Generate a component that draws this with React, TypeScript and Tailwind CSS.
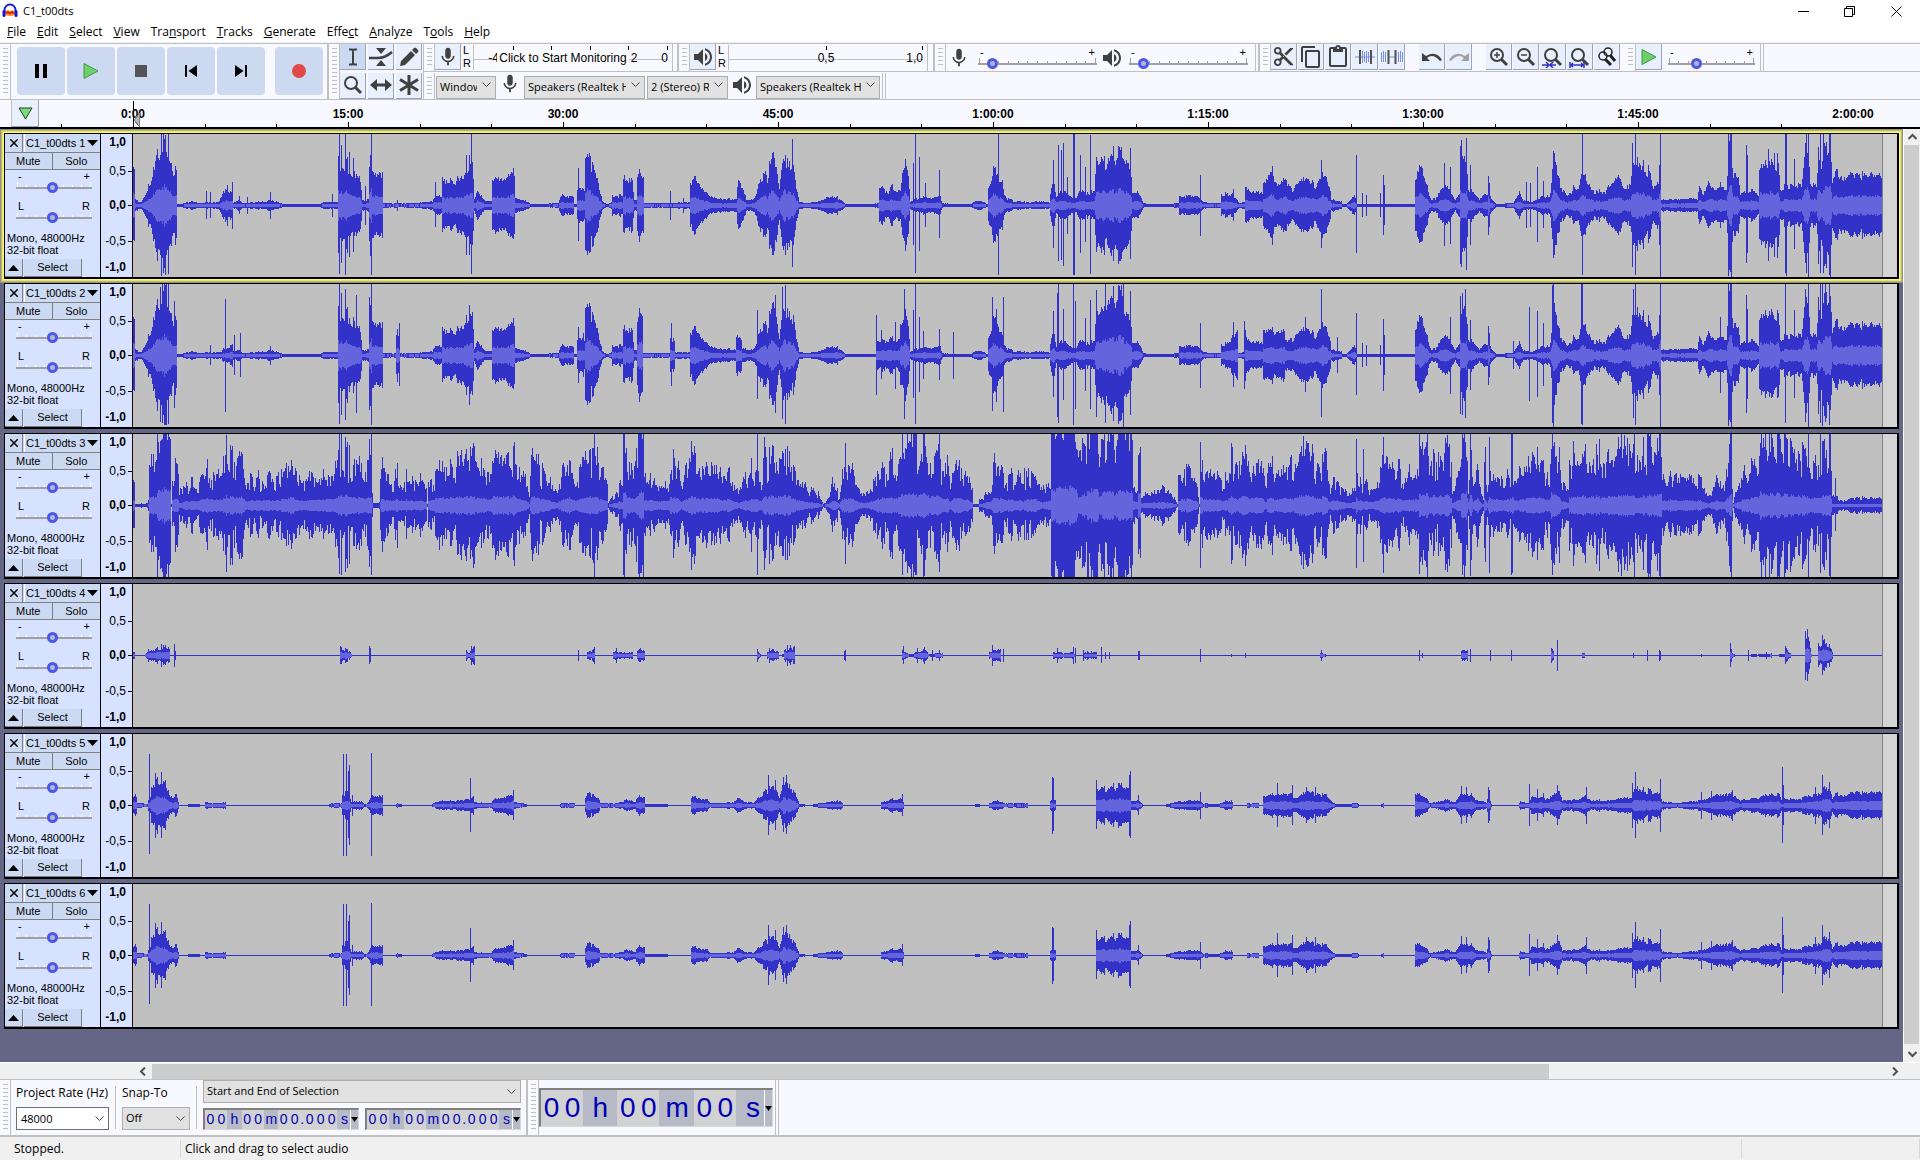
import React, { useMemo } from 'react';
import {
   MdContentCopy,
   MdContentCut,
   MdContentPaste,
   MdMic,
   MdSkipNext,
   MdSkipPrevious,
   MdVolumeUp,
} from 'react-icons/md';

type Track = {
   name: string;
   env: number[];
   spikes: number[];
   jitter: number;
   rms: number;
   selected?: boolean;
};

const CLIP_WIDTH = 1749;
const HALF = 71;

// Envelopes are flat lists of x, amplitude pairs; spikes use the same shape.
const FRONT_ENV = [
   0, 38, 2, 32, 2, 6, 6, 3, 8, 3, 14, 18, 18, 25, 20, 42, 25, 58, 31, 65, 37, 50, 43, 32, 44, 32, 44, 1, 47, 1, 54, 3,
   60, 4, 68, 2, 72, 3, 85, 3, 89, 12, 93, 18, 100, 10, 100, 3, 106, 5, 109, 2, 140, 5, 150, 1, 181, 1, 188, 2, 192, 4,
   204, 3, 205, 3, 205, 48, 215, 46, 227, 27, 229, 6, 235, 6, 236, 40, 238, 55, 239, 32, 249, 30, 250, 2, 286, 2, 299,
   5, 301, 10, 308, 9, 309, 28, 328, 27, 339, 40, 341, 5, 344, 16, 351, 5, 359, 5, 359, 27, 374, 28, 379, 42, 381, 26,
   382, 8, 395, 3, 397, 1, 425, 2, 427, 10, 440, 9, 441, 1, 444, 1, 444, 18, 451, 14, 452, 42, 454, 53, 460, 38, 464,
   28, 469, 4, 473, 1, 478, 3, 479, 11, 489, 10, 490, 30, 499, 28, 501, 5, 504, 5, 504, 35, 510, 28, 511, 2, 533, 2,
   556, 3, 557, 24, 563, 28, 571, 15, 579, 8, 597, 6, 603, 7, 605, 28, 609, 16, 613, 6, 618, 5, 623, 12, 627, 30, 634,
   32, 637, 48, 641, 55, 644, 40, 646, 18, 648, 40, 651, 54, 658, 40, 660, 40, 662, 25, 666, 4, 672, 2, 685, 4, 693, 8,
   704, 9, 709, 4, 712, 1, 737, 1, 745, 2, 746, 22, 756, 14, 758, 20, 767, 16, 769, 35, 772, 50, 775, 30, 777, 3, 785,
   8, 794, 9, 807, 9, 809, 2, 817, 1, 838, 1, 842, 4, 848, 5, 854, 1, 855, 20, 859, 38, 862, 40, 865, 30, 869, 20, 873,
   8, 880, 4, 895, 3, 903, 4, 917, 3, 917, 15, 920, 30, 923, 10, 930, 16, 940, 6, 947, 15, 955, 12, 961, 15, 963, 48,
   972, 48, 976, 52, 987, 52, 991, 48, 997, 45, 999, 15, 1005, 15, 1008, 8, 1010, 2, 1014, 1, 1028, 1, 1045, 2, 1046,
   10, 1067, 9, 1069, 4, 1075, 2, 1087, 2, 1088, 12, 1099, 12, 1103, 6, 1106, 2, 1111, 3, 1112, 18, 1129, 12, 1130, 22,
   1139, 35, 1144, 22, 1152, 28, 1158, 16, 1163, 24, 1171, 26, 1183, 22, 1188, 35, 1191, 28, 1197, 20, 1198, 6, 1208,
   4, 1209, 1, 1213, 1, 1221, 10, 1224, 3, 1224, 1, 1281, 1, 1282, 28, 1288, 42, 1292, 24, 1298, 6, 1302, 8, 1310, 22,
   1317, 14, 1322, 5, 1327, 12, 1327, 55, 1333, 50, 1335, 18, 1340, 14, 1346, 6, 1352, 12, 1354, 12, 1355, 38, 1357,
   10, 1361, 3, 1363, 1, 1380, 3, 1386, 12, 1390, 5, 1399, 3, 1407, 8, 1417, 12, 1419, 40, 1420, 60, 1424, 40, 1427,
   18, 1434, 10, 1440, 18, 1445, 18, 1448, 35, 1455, 25, 1461, 14, 1472, 15, 1482, 28, 1487, 26, 1491, 15, 1497, 22,
   1499, 45, 1505, 44, 1514, 38, 1520, 20, 1525, 24, 1527, 60, 1528, 6, 1551, 6, 1564, 7, 1566, 18, 1570, 12, 1575, 26,
   1583, 14, 1587, 22, 1593, 14, 1595, 55, 1598, 68, 1600, 35, 1605, 30, 1607, 12, 1619, 16, 1625, 12, 1626, 40, 1635,
   48, 1645, 42, 1647, 15, 1651, 20, 1655, 20, 1663, 22, 1669, 25, 1672, 60, 1675, 60, 1677, 25, 1683, 20, 1685, 65,
   1689, 40, 1692, 65, 1697, 65, 1699, 22, 1702, 32, 1715, 33, 1723, 30, 1738, 31, 1749, 29,
];

const FRONT_SPIKES = [
   28, 72, 30, 72, 35, 72, 73, 14, 77, 13, 94, 20, 99, 23, 106, 9, 114, 8, 137, 13, 199, 11, 206, 72, 208, 60, 212, 72,
   216, 53, 220, 47, 232, 19, 238, 72, 264, 5, 302, 23, 333, 50, 336, 50, 338, 72, 445, 37, 537, 14, 550, 7, 659, 66,
   780, 42, 782, 71, 786, 48, 792, 22, 806, 35, 865, 72, 869, 25, 920, 45, 925, 60, 928, 55, 930, 62, 934, 28, 940, 72,
   941, 72, 947, 50, 952, 38, 957, 70, 997, 57, 1067, 30, 1100, 16, 1188, 45, 1223, 50, 1229, 12, 1233, 10, 1247, 12,
   1250, 30, 1251, 20, 1311, 42, 1317, 38, 1328, 65, 1333, 67, 1337, 40, 1393, 23, 1397, 22, 1404, 38, 1410, 24, 1449,
   72, 1499, 62, 1502, 72, 1527, 72, 1595, 72, 1597, 72, 1613, 60, 1614, 50, 1635, 56, 1641, 52, 1644, 52, 1652, 72,
   1653, 72, 1661, 46, 1673, 72, 1675, 72, 1687, 72, 1690, 72, 1697, 72,
];

const CENTER_ENV = [
   0, 28, 2, 22, 2, 1, 12, 2, 15, 5, 16, 58, 20, 70, 23, 55, 25, 110, 37, 110, 38, 2, 39, 50, 45, 35, 46, 20, 49, 14,
   50, 24, 66, 32, 74, 44, 89, 44, 93, 68, 98, 56, 108, 54, 113, 34, 123, 32, 142, 34, 152, 40, 158, 60, 164, 34, 171,
   32, 181, 38, 192, 44, 204, 48, 206, 70, 217, 65, 227, 54, 239, 50, 239, 12, 240, 2, 246, 3, 248, 50, 250, 38, 265,
   38, 294, 26, 294, 3, 295, 38, 315, 54, 339, 56, 359, 44, 359, 58, 372, 60, 381, 58, 383, 48, 394, 26, 396, 8, 398,
   60, 408, 48, 424, 14, 426, 32, 436, 58, 439, 34, 462, 60, 474, 28, 475, 4, 481, 15, 490, 30, 490, 90, 493, 90, 494,
   58, 501, 46, 504, 70, 510, 90, 511, 34, 535, 26, 537, 62, 544, 46, 548, 24, 558, 62, 563, 50, 586, 46, 597, 36, 605,
   16, 614, 34, 621, 50, 628, 32, 631, 56, 637, 64, 643, 68, 654, 68, 662, 38, 673, 22, 683, 19, 690, 2, 695, 8, 700,
   34, 706, 10, 709, 38, 713, 50, 719, 38, 731, 14, 742, 32, 744, 50, 760, 54, 765, 60, 769, 80, 777, 74, 783, 80, 804,
   70, 807, 56, 814, 46, 817, 20, 821, 46, 832, 46, 839, 18, 840, 1, 845, 1, 846, 8, 857, 26, 861, 54, 873, 38, 890,
   30, 895, 44, 902, 40, 909, 18, 917, 35, 918, 125, 943, 125, 945, 60, 953, 80, 955, 115, 964, 115, 966, 62, 974, 110,
   980, 85, 999, 110, 1000, 35, 1004, 20, 1005, 90, 1007, 90, 1008, 12, 1025, 22, 1037, 16, 1044, 2, 1045, 38, 1054,
   46, 1063, 28, 1066, 2, 1067, 58, 1071, 44, 1094, 30, 1097, 70, 1104, 46, 1112, 58, 1129, 48, 1133, 20, 1134, 46,
   1152, 44, 1167, 64, 1175, 64, 1192, 54, 1197, 28, 1204, 34, 1214, 12, 1222, 20, 1223, 60, 1225, 36, 1242, 24, 1250,
   48, 1263, 44, 1282, 42, 1285, 36, 1286, 74, 1298, 70, 1313, 72, 1318, 58, 1319, 14, 1328, 40, 1328, 100, 1333, 100,
   1335, 20, 1337, 80, 1340, 25, 1344, 50, 1347, 20, 1350, 5, 1351, 50, 1354, 20, 1356, 60, 1359, 42, 1376, 42, 1379,
   70, 1382, 28, 1395, 50, 1405, 50, 1417, 46, 1418, 90, 1421, 80, 1426, 60, 1428, 25, 1435, 20, 1436, 60, 1451, 62,
   1478, 58, 1495, 68, 1500, 78, 1503, 46, 1508, 60, 1516, 70, 1524, 76, 1528, 90, 1529, 38, 1545, 34, 1568, 30, 1575,
   12, 1583, 30, 1591, 20, 1593, 38, 1598, 74, 1600, 5, 1603, 20, 1612, 42, 1625, 60, 1627, 88, 1642, 84, 1652, 74,
   1669, 68, 1677, 50, 1686, 58, 1697, 70, 1699, 10, 1702, 8, 1749, 8,
];

const CENTER_SPIKES = [
   93, 70, 206, 72, 208, 72, 212, 68, 216, 60, 236, 66, 238, 72, 264, 42, 333, 56, 461, 72, 464, 58, 490, 72, 491, 72,
   505, 72, 508, 72, 558, 64, 624, 72, 631, 68, 712, 62, 769, 72, 774, 72, 783, 72, 791, 72, 806, 72, 861, 52, 1067,
   63, 1098, 62, 1112, 60, 1223, 66, 1230, 56, 1250, 68, 1286, 72, 1337, 72, 1352, 58, 1356, 68, 1378, 72, 1379, 72,
   1404, 58, 1419, 72, 1488, 72, 1501, 72, 1514, 72, 1526, 72, 1527, 72, 1597, 72, 1598, 64, 1636, 72, 1652, 72, 1675,
   72, 1687, 72, 1696, 72, 1697, 72, 1702, 27,
];

const LFE_ENV = [
   0, 3, 2, 3, 2, 0, 11, 0, 14, 5, 24, 8, 36, 9, 37, 0, 206, 0, 207, 9, 217, 5, 219, 0, 332, 0, 333, 6, 335, 2, 341, 8,
   342, 0, 453, 0, 454, 3, 461, 6, 462, 0, 479, 0, 480, 6, 487, 3, 499, 4, 500, 0, 504, 0, 504, 6, 511, 5, 512, 0, 623,
   0, 624, 5, 627, 1, 628, 0, 633, 0, 634, 6, 645, 6, 646, 0, 650, 1, 651, 7, 661, 9, 662, 0, 768, 0, 769, 6, 776, 1,
   780, 1, 785, 5, 793, 6, 796, 1, 809, 3, 810, 0, 855, 0, 856, 5, 867, 7, 868, 0, 919, 0, 920, 4, 932, 2, 939, 3, 944,
   0, 950, 0, 952, 4, 963, 3, 964, 0, 1186, 0, 1187, 3, 1192, 1, 1193, 0, 1327, 0, 1328, 7, 1334, 6, 1335, 0, 1417, 0,
   1418, 10, 1420, 5, 1421, 0, 1448, 0, 1449, 2, 1451, 2, 1452, 0, 1596, 0, 1597, 7, 1601, 1, 1602, 0, 1629, 1, 1638,
   2, 1639, 0, 1651, 1, 1653, 7, 1657, 2, 1658, 0, 1671, 0, 1672, 18, 1676, 18, 1678, 2, 1679, 0, 1684, 0, 1685, 15,
   1694, 14, 1698, 7, 1700, 0, 1749, 0,
];

const LFE_SPIKES = [
   28, 11, 30, 10, 41, 11, 42, 4, 207, 9, 236, 9, 237, 7, 338, 9, 445, 5, 461, 8, 483, 7, 507, 7, 624, 6, 636, 7, 654,
   10, 657, 10, 711, 4, 712, 5, 770, 9, 784, 7, 791, 8, 799, 5, 806, 5, 859, 10, 870, 6, 924, 7, 940, 8, 942, 7, 950,
   5, 968, 8, 972, 3, 976, 3, 1005, 4, 1006, 4, 1067, 6, 1098, 1, 1112, 2, 1188, 5, 1286, 5, 1289, 2, 1337, 6, 1357, 5,
   1378, 5, 1424, 15, 1500, 2, 1514, 5, 1526, 5, 1527, 4, 1568, 1, 1597, 12, 1615, 5, 1633, 3, 1652, 9, 1672, 24, 1674,
   26, 1675, 18, 1689, 20, 1691, 16,
];

const REAR_ENV = [
   0, 8, 3, 10, 4, 2, 14, 2, 17, 10, 18, 20, 23, 28, 28, 27, 32, 22, 37, 10, 43, 10, 45, 3, 46, 0, 54, 0, 55, 1, 66, 1,
   67, 0, 71, 0, 72, 3, 83, 2, 92, 3, 93, 0, 195, 0, 198, 2, 208, 2, 209, 13, 216, 14, 218, 4, 229, 4, 231, 1, 235, 3,
   238, 9, 249, 9, 250, 0, 262, 0, 264, 2, 268, 1, 269, 0, 298, 0, 299, 2, 310, 5, 330, 5, 340, 8, 341, 3, 358, 2, 360,
   6, 373, 9, 380, 14, 381, 3, 393, 1, 394, 0, 426, 0, 427, 2, 441, 2, 442, 0, 451, 0, 452, 6, 454, 13, 466, 7, 467, 2,
   478, 2, 489, 3, 493, 7, 502, 3, 504, 9, 511, 8, 512, 1, 534, 1, 535, 0, 557, 0, 558, 9, 574, 6, 577, 2, 600, 3, 605,
   8, 611, 3, 620, 3, 627, 10, 637, 20, 644, 18, 646, 8, 650, 26, 657, 20, 663, 10, 666, 1, 677, 0, 686, 2, 707, 5,
   710, 0, 748, 0, 748, 3, 757, 6, 769, 8, 771, 0, 841, 0, 842, 1, 846, 1, 847, 0, 855, 0, 856, 3, 864, 5, 872, 2, 894,
   2, 895, 0, 917, 0, 917, 6, 922, 6, 923, 0, 962, 0, 963, 18, 979, 20, 993, 19, 997, 20, 998, 5, 1005, 6, 1009, 1,
   1011, 0, 1030, 0, 1045, 4, 1067, 5, 1069, 2, 1085, 1, 1091, 4, 1098, 5, 1100, 0, 1113, 0, 1114, 2, 1125, 2, 1126, 0,
   1129, 0, 1130, 9, 1142, 12, 1157, 12, 1162, 8, 1174, 14, 1187, 13, 1197, 7, 1200, 2, 1208, 1, 1217, 1, 1223, 3,
   1226, 0, 1247, 0, 1250, 2, 1251, 0, 1281, 0, 1282, 13, 1292, 8, 1297, 2, 1311, 6, 1322, 3, 1328, 12, 1338, 12, 1343,
   5, 1353, 3, 1355, 12, 1358, 1, 1359, 0, 1385, 0, 1387, 4, 1395, 2, 1398, 8, 1415, 8, 1425, 16, 1429, 5, 1444, 6,
   1452, 10, 1458, 5, 1475, 5, 1498, 8, 1501, 18, 1516, 15, 1527, 13, 1529, 4, 1544, 2, 1567, 5, 1579, 10, 1599, 12,
   1607, 5, 1624, 8, 1633, 12, 1645, 12, 1648, 6, 1665, 7, 1682, 12, 1696, 21, 1699, 6, 1702, 11, 1719, 13, 1749, 13,
];

const REAR_SPIKES = [
   2, 11, 16, 51, 22, 32, 28, 33, 210, 51, 213, 51, 215, 34, 216, 40, 219, 10, 238, 52, 337, 27, 635, 30, 642, 25, 650,
   28, 653, 30, 769, 11, 919, 28, 920, 27, 963, 25, 996, 30, 997, 34, 1005, 10, 1067, 13, 1144, 22, 1159, 20, 1173, 18,
   1182, 18, 1328, 19, 1333, 18, 1355, 18, 1356, 15, 1396, 21, 1404, 16, 1410, 12, 1424, 20, 1453, 18, 1499, 22, 1502,
   33, 1527, 26, 1568, 13, 1578, 14, 1599, 15, 1649, 38, 1650, 20, 1682, 18, 1689, 30, 1696, 23,
];

// Replaces the stretch between x0 and x1 with a straight ramp a0 -> a1.
const patch = (env: number[], parts: number[][]) =>
   parts.reduce((list, [x0, x1, a0, a1]) => {
      const before: number[] = [];
      const after: number[] = [];
      for (let i = 0; i < list.length; i += 2) {
         if (list[i] < x0) before.push(list[i], list[i + 1]);
         if (list[i] > x1) after.push(list[i], list[i + 1]);
      }
      const prev = before[before.length - 1];
      return [...before, x0, prev, x0, a0, x1, a1, x1, after[1], ...after];
   }, env);

const SURROUND_ENV = patch(FRONT_ENV, [
   [89, 100, 6, 10],
   [263, 267, 22, 28],
   [504, 510, 42, 42],
   [537, 542, 22, 12],
   [603, 609, 20, 16],
   [743, 767, 16, 18],
   [972, 991, 60, 62],
   [1094, 1105, 14, 26],
   [1130, 1152, 25, 26],
]);

const SURROUND_SPIKES = [
   27, 68, 29, 72, 31, 72, 33, 72, 35, 72, 41, 54, 77, 10, 92, 56, 101, 20, 107, 22, 137, 9, 206, 72, 208, 62, 212, 66,
   220, 38, 223, 60, 236, 58, 238, 72, 264, 26, 266, 32, 333, 40, 336, 50, 445, 28, 450, 22, 538, 32, 624, 45, 642, 60,
   649, 68, 652, 70, 743, 40, 748, 25, 762, 33, 771, 66, 780, 45, 782, 72, 786, 38, 790, 24, 806, 26, 820, 23, 859, 58,
   863, 46, 870, 58, 920, 44, 924, 62, 925, 72, 930, 46, 940, 72, 942, 54, 952, 37, 957, 55, 963, 65, 972, 72, 986, 66,
   990, 72, 997, 64, 1067, 32, 1100, 33, 1111, 34, 1112, 25, 1172, 38, 1188, 66, 1204, 18, 1223, 42, 1229, 12, 1233,
   10, 1247, 10, 1250, 36, 1251, 20, 1317, 38, 1329, 62, 1332, 66, 1337, 35, 1380, 14, 1396, 48, 1404, 44, 1410, 32,
   1419, 70, 1420, 72, 1448, 72, 1449, 72, 1500, 66, 1502, 72, 1527, 72, 1587, 38, 1595, 72, 1597, 72, 1613, 60, 1614,
   46, 1652, 72, 1661, 45, 1672, 66, 1675, 72, 1687, 72, 1689, 72, 1692, 72, 1696, 72,
];

const TRACKS: Track[] = [
   { name: 'C1_t00dts 1', env: FRONT_ENV, spikes: FRONT_SPIKES, jitter: 0.4, rms: 0.24, selected: true },
   { name: 'C1_t00dts 2', env: SURROUND_ENV, spikes: SURROUND_SPIKES, jitter: 0.4, rms: 0.24 },
   { name: 'C1_t00dts 3', env: CENTER_ENV, spikes: CENTER_SPIKES, jitter: 0.7, rms: 0.12 },
   { name: 'C1_t00dts 4', env: LFE_ENV, spikes: LFE_SPIKES, jitter: 0.6, rms: 0.3 },
   { name: 'C1_t00dts 5', env: REAR_ENV, spikes: REAR_SPIKES, jitter: 0.45, rms: 0.25 },
   { name: 'C1_t00dts 6', env: REAR_ENV, spikes: REAR_SPIKES, jitter: 0.45, rms: 0.25 },
];

const buildPaths = ({ env, spikes, jitter, rms }: Track) => {
   let seed = 7919;
   const random = () => {
      seed = (seed * 16807) % 2147483647;
      return seed / 2147483647;
   };
   const peaks = new Map<number, number>();
   for (let i = 0; i < spikes.length; i += 2) peaks.set(spikes[i], spikes[i + 1]);

   let outer = '';
   let inner = '';
   let k = 0;
   let drift = 0;
   let hold = 0;
   for (let x = 0; x < CLIP_WIDTH; x++) {
      while (k + 4 < env.length && env[k + 2] <= x) k += 2;
      // loudness wanders in short steps so neighbouring columns clump together
      if (hold-- <= 0) {
         drift = random();
         hold = Math.floor(random() * 4);
      }
      const span = env[k + 2] - env[k] || 1;
      const t = Math.min(1, (x - env[k]) / span);
      const amp = env[k + 1] + (env[k + 3] - env[k + 1]) * t;
      const level = 1.15 - jitter * (0.5 * random() + 0.7 * drift);
      const up = Math.max(peaks.get(x) ?? 0, amp * level);
      const down = Math.max((peaks.get(x) ?? 0) * (0.92 + 0.08 * random()), amp * (level - 0.1 * random()));
      const top = Math.max(0, Math.round(HALF - up));
      const bottom = Math.min(143, Math.round(HALF + 1 + down));
      outer += `M${x}.5 ${top}V${bottom}`;
      const core = Math.round(Math.min(28, amp * rms * (0.8 + 0.3 * random() + 0.3 * (1 - drift))));
      if (core >= 1) inner += `M${x}.5 ${HALF - core}V${HALF + 1 + core}`;
   }
   return { outer, inner };
};

const Waveform = ({ track }: { track: Track }) => {
   const { outer, inner } = useMemo(() => buildPaths(track), [track]);
   return (
      <svg width={CLIP_WIDTH} height={143} className="block shrink-0 bg-[#c0c0c0]" shapeRendering="crispEdges">
         <path d={outer} stroke="#3232c8" />
         <path d={inner} stroke="#6464dc" />
      </svg>
   );
};

const Grip = () => (
   <div className="flex w-[11px] shrink-0 justify-center border-r border-[#c0c0c0] py-1">
      <div className="w-[5px] bg-[repeating-linear-gradient(#c0c0c0_0_1px,transparent_1px_4px)]" />
   </div>
);

const ToolButton = ({
   label,
   active,
   children,
}: {
   label: string;
   active?: boolean;
   children: React.ReactNode;
}) => (
   <button
      aria-label={label}
      className={`flex h-[26px] w-[26px] shrink-0 items-center justify-center border-r border-b border-[#9aa3b8] text-[#404040] ${
         active ? 'bg-[#ccd9f2]' : 'bg-[#e9f0fd]'
      }`}
   >
      {children}
   </button>
);

const TransportButton = ({ label, children }: { label: string; children: React.ReactNode }) => (
   <button aria-label={label} className="flex h-12 w-12 items-center justify-center rounded-[4px] bg-[#cdd9f1]">
      {children}
   </button>
);

const Slider = ({
   label,
   value,
   ticks,
   left,
   right,
   light,
}: {
   label: string;
   value: number;
   ticks: number;
   left: string;
   right: string;
   light?: boolean;
}) => (
   <div className="flex w-full flex-col">
      <div className="flex h-3 justify-between px-[2px] text-[11px] leading-3">
         <span>{left}</span>
         <span>{right}</span>
      </div>
      <div className="relative h-3">
         <div className="absolute inset-x-0 top-0 flex h-[7px] items-end justify-between border-b-2 border-[#a0a0a0] px-px">
            {Array.from({ length: ticks }, (_, i) => (
               <span
                  key={i}
                  className={`w-px ${i === 0 || i === ticks - 1 ? 'h-[5px]' : 'h-[2px]'} ${
                     light ? 'bg-white' : 'bg-[#a0a0a0]'
                  }`}
               />
            ))}
         </div>
         <input
            type="range"
            aria-label={label}
            defaultValue={value}
            className="absolute inset-x-0 top-0 h-[11px] w-full appearance-none bg-transparent [&::-webkit-slider-thumb]:h-[11px] [&::-webkit-slider-thumb]:w-[11px] [&::-webkit-slider-thumb]:appearance-none [&::-webkit-slider-thumb]:rounded-full [&::-webkit-slider-thumb]:border-[3px] [&::-webkit-slider-thumb]:border-[#4b58ea] [&::-webkit-slider-thumb]:bg-[#b4b8cc]"
         />
      </div>
   </div>
);

const Dropdown = ({ label, value, className }: { label: string; value: string; className: string }) => (
   <div className={`relative shrink-0 ${className}`}>
      <select
         aria-label={label}
         className="h-full w-full appearance-none overflow-hidden border border-[#adadad] bg-[#e1e1e1] pr-[18px] pl-[3px] text-[11px]"
      >
         <option>{value}</option>
      </select>
      <Chevron />
   </div>
);

const Chevron = () => (
   <svg width="9" height="6" className="pointer-events-none absolute top-1/2 right-[5px] -translate-y-1/2">
      <path d="M.5 .5L4.500 4.500L8.500 .5" fill="none" stroke="#444" />
   </svg>
);

const Lens = ({ sign, children }: { sign?: string; children?: React.ReactNode }) => (
   <svg width="22" height="22" viewBox="0 0 22 22" fill="none" stroke="#404040">
      <circle cx="9" cy="9" r="6" strokeWidth="2" />
      <path d="M13 13L19 19" strokeWidth="3" />
      {sign && <path d={sign} strokeWidth="1.500" />}
      {children}
   </svg>
);

const PlayIcon = () => (
   <svg width="16" height="18" viewBox="0 0 16 18">
      <path d="M1 1.500L15 9L1 16.500Z" fill="#6fcf6f" stroke="#3f9a45" />
   </svg>
);

const MENUS = [
   ['', 'F', 'ile'],
   ['', 'E', 'dit'],
   ['', 'S', 'elect'],
   ['', 'V', 'iew'],
   ['Tra', 'n', 'sport'],
   ['', 'T', 'racks'],
   ['', 'G', 'enerate'],
   ['Effe', 'c', 't'],
   ['', 'A', 'nalyze'],
   ['T', 'o', 'ols'],
   ['', 'H', 'elp'],
];

const TitleBar = () => (
   <header className="flex h-[22px] items-center justify-between bg-white">
      <div className="flex items-center gap-[5px] pl-[2px]">
         <svg width="16" height="16" viewBox="0 0 16 16">
            <path d="M3 9Q5 6 8 8Q11 6 13 9V12Q8 14 3 12Z" fill="#ff9b1a" />
            <path d="M4 10L6 9L8 10.500L10 9L12 10.500" stroke="#e02010" strokeWidth="2" fill="none" />
            <path d="M2.500 9V7A5.500 5.500 0 0 1 13.500 7V9" fill="none" stroke="#1414d8" strokeWidth="1.800" />
            <rect x="0.500" y="7" width="3" height="7" rx="1.500" fill="#1414d8" />
            <rect x="12.500" y="7" width="3" height="7" rx="1.500" fill="#1414d8" />
         </svg>
         <h1 className="font-['Open_Sans',sans-serif] text-[11px]">C1_t00dts</h1>
      </div>
      <div className="flex">
         <button aria-label="Minimize" className="flex w-[45px] justify-center">
            <svg width="11" height="11"><path d="M0 5.500H11" stroke="#000" /></svg>
         </button>
         <button aria-label="Restore" className="flex w-[46px] justify-center">
            <svg width="11" height="11" fill="none" stroke="#000">
               <path d="M.5 2.500H8.500V10.500H.5ZM2.500 2.500V.5H10.500V8.500H8.500" />
            </svg>
         </button>
         <button aria-label="Close" className="flex w-[48px] justify-center">
            <svg width="11" height="11"><path d="M.5 .5L10.500 10.500M10.500 .5L.5 10.500" stroke="#000" /></svg>
         </button>
      </div>
   </header>
);

const TransportBar = () => (
   <div className="flex w-[329px] shrink-0 border-r-2 border-[#c0c0c0]">
      <Grip />
      <div className="flex items-start gap-[2px] pt-[3px] pl-[6px]">
         <TransportButton label="Pause">
            <svg width="12" height="14"><path d="M0 0H4V14H0ZM8 0H12V14H8Z" /></svg>
         </TransportButton>
         <TransportButton label="Play"><PlayIcon /></TransportButton>
         <TransportButton label="Stop">
            <span className="h-3 w-3 bg-[#555]" />
         </TransportButton>
         <TransportButton label="Skip to Start">
            <MdSkipPrevious className="h-6 w-6" />
         </TransportButton>
         <TransportButton label="Skip to End">
            <MdSkipNext className="h-6 w-6" />
         </TransportButton>
         <div className="pl-2">
            <TransportButton label="Record">
               <span className="h-[14px] w-[14px] rounded-full bg-[#e14848]" />
            </TransportButton>
         </div>
      </div>
   </div>
);

const ToolsBar = () => (
   <div className="flex w-[95px] shrink-0 border-r border-[#c0c0c0]">
      <Grip />
      <div className="grid grid-cols-3 gap-x-[2px] gap-y-[2px]">
         <ToolButton label="Selection Tool" active>
            <svg width="12" height="18" fill="none" stroke="#404040" strokeWidth="2">
               <path d="M2 1.500H5L6 3L7 1.500H10M6 2V16M2 16.500H5L6 15L7 16.500H10" />
            </svg>
         </ToolButton>
         <ToolButton label="Envelope Tool">
            <svg width="24" height="20" fill="#404040">
               <path d="M7 1H17L12 7ZM7 19H17L12 13Z" />
               <path d="M0 11H9Q16 11 23 5" fill="none" stroke="#404040" strokeWidth="2.500" />
            </svg>
         </ToolButton>
         <ToolButton label="Draw Tool">
            <svg width="20" height="20" fill="#404040">
               <path d="M1 19L2 14L12 4L16 8L6 18ZM13 3L15 1Q16 0 17 1L19 3Q20 4 19 5L17 7Z" />
            </svg>
         </ToolButton>
         <ToolButton label="Zoom Tool"><Lens /></ToolButton>
         <ToolButton label="Time Shift Tool">
            <svg width="22" height="12" fill="#404040">
               <path d="M0 6L7 0V4.500H15V0L22 6L15 12V7.500H7V12Z" />
            </svg>
         </ToolButton>
         <ToolButton label="Multi-Tool">
            <svg width="20" height="20" stroke="#404040" strokeWidth="3">
               <path d="M10 0V20M1 4.500L19 15.500M19 4.500L1 15.500" />
            </svg>
         </ToolButton>
      </div>
   </div>
);

const Channels = () => (
   <div className="flex w-[12px] shrink-0 flex-col pl-[2px] text-[11px] leading-[13px]">
      <span>L</span>
      <span>R</span>
   </div>
);

const MeterTicks = ({ count }: { count: number }) => (
   <div className="flex h-[5px] justify-between pt-px">
      {Array.from({ length: count }, (_, i) => (
         <span key={i} className={`h-1 w-px ${i === 0 ? '' : 'bg-black'}`} />
      ))}
   </div>
);

const Meters = () => (
   <>
      <div className="flex w-[255px] border-r-2 border-[#c0c0c0]">
         <Grip />
         <ToolButton label="Record Meter"><MdMic className="h-[22px] w-[22px]" /></ToolButton>
         <Channels />
         <button className="relative my-px flex w-[195px] flex-col border-l border-[#c0c0c0] text-[12px]">
            <span className="absolute inset-x-0 top-[14px] border-t border-[#c0c0c0]" />
            <div className="w-full"><MeterTicks count={6} /></div>
            <div className="relative flex h-4 w-full items-center justify-end leading-4">
               <div className="flex w-[9px] overflow-hidden"><span>-4</span></div>
               <span className="bg-[#fbfcff] px-[2px]">Click to Start Monitoring</span>
               <span className="mr-6 ml-[2px]">2</span>
               <span>0</span>
            </div>
         </button>
         <div className="ml-1 border-l border-[#c0c0c0]" />
      </div>
      <div className="flex w-[256px] border-r-2 border-[#c0c0c0]">
         <Grip />
         <ToolButton label="Playback Meter"><MdVolumeUp className="h-[24px] w-[24px]" /></ToolButton>
         <Channels />
         <button className="relative my-px flex w-[195px] flex-col border-l border-[#c0c0c0] text-[12px]">
            <span className="absolute inset-x-0 top-[14px] border-t border-[#c0c0c0]" />
            <div className="w-full"><MeterTicks count={3} /></div>
            <div className="relative grid h-4 w-full grid-cols-3 leading-4">
               <span />
               <span className="text-center">0,5</span>
               <span className="text-right">1,0</span>
            </div>
         </button>
         <div className="ml-1 border-l border-[#c0c0c0]" />
      </div>
   </>
);

const MixerBar = () => (
   <div className="flex w-[321px] items-center border-r border-[#c0c0c0]">
      <div className="flex h-full"><Grip /></div>
      <MdMic className="ml-[2px] h-[22px] w-[22px] shrink-0 text-[#404040]" />
      <div className="ml-2 w-[119px] shrink-0">
         <Slider label="Recording Volume" value={8} ticks={13} left="-" right="+" />
      </div>
      <MdVolumeUp className="ml-[3px] h-[24px] w-[24px] shrink-0 text-[#404040]" />
      <div className="ml-[5px] w-[119px] shrink-0">
         <Slider label="Playback Volume" value={8} ticks={13} left="-" right="+" />
      </div>
   </div>
);

const EditBar = () => (
   <div className="ml-[2px] flex w-[367px] border-l-2 border-[#c0c0c0]">
      <Grip />
      <div className="flex gap-px">
         <ToolButton label="Cut"><MdContentCut className="h-[23px] w-[23px]" /></ToolButton>
         <ToolButton label="Copy"><MdContentCopy className="h-[24px] w-[24px]" /></ToolButton>
         <ToolButton label="Paste"><MdContentPaste className="h-[24px] w-[24px]" /></ToolButton>
         <ToolButton label="Trim">
            <svg width="20" height="16" fill="none" stroke="#7a8ce8">
               <path d="M0 8H20M7.500 2V14M9.500 3V13M11.500 2V14M13.500 3V13" />
               <path d="M5 1V15M16 1V15" stroke="#505050" strokeWidth="2" />
            </svg>
         </ToolButton>
         <ToolButton label="Silence">
            <svg width="22" height="16" fill="none" stroke="#7a8ce8">
               <path d="M.5 3V13M2.500 2V13M4.500 3V13M7 8H15M17.500 3V13M19.500 2V13M21.500 3V13" />
               <path d="M7.500 1V15M14.500 1V15" stroke="#505050" strokeWidth="2" />
            </svg>
         </ToolButton>
      </div>
      <div className="ml-[14px] flex gap-px">
         <ToolButton label="Undo">
            <svg width="22" height="14"><path d="M1 3V11H9L6 8Q12 3 19 11L21 10Q15 0 5 6Z" fill="#404040" /></svg>
         </ToolButton>
         <ToolButton label="Redo">
            <svg width="22" height="14"><path d="M21 3V11H13L16 8Q10 3 3 11L1 10Q7 0 17 6Z" fill="#a0a0a0" /></svg>
         </ToolButton>
      </div>
      <div className="ml-[14px] flex gap-px">
         <ToolButton label="Zoom In"><Lens sign="M6 9H12M9 6V12" /></ToolButton>
         <ToolButton label="Zoom Out"><Lens sign="M6 9H12" /></ToolButton>
         <ToolButton label="Fit Selection">
            <Lens><path d="M0 19H14M4 16L7 19L4 22M11 16L8 19L11 22" stroke="#3232c8" strokeWidth="1.500" /></Lens>
         </ToolButton>
         <ToolButton label="Fit Project">
            <Lens><path d="M1 19H15M1 16V22M15 16V22M4 17L2 19L4 21M12 17L14 19L12 21" stroke="#3232c8" strokeWidth="1.500" /></Lens>
         </ToolButton>
         <ToolButton label="Zoom Toggle">
            <svg width="20" height="20" fill="none" stroke="#202020">
               <circle cx="6" cy="9" r="4" strokeWidth="1.500" />
               <circle cx="11" cy="5" r="4" strokeWidth="1.500" />
               <path d="M8 12L14 18M13 8L18 14" strokeWidth="3" />
            </svg>
         </ToolButton>
      </div>
   </div>
);

const DeviceBar = () => (
   <div className="flex h-[27px] items-start pt-px">
      <div className="flex h-full"><Grip /></div>
      <Dropdown label="Audio Host" value="Windows DirectSound" className="ml-px h-[23px] w-[60px]" />
      <MdMic className="mx-[3px] h-[22px] w-[22px] shrink-0 text-[#404040]" />
      <Dropdown label="Recording Device" value="Speakers (Realtek High Definition)" className="h-[23px] w-[121px]" />
      <Dropdown label="Recording Channels" value="2 (Stereo) Recording" className="ml-[2px] h-[23px] w-[81px]" />
      <MdVolumeUp className="mx-[2px] h-[24px] w-[24px] shrink-0 text-[#404040]" />
      <Dropdown label="Playback Device" value="Speakers (Realtek High Definition)" className="h-[23px] w-[124px]" />
      <div className="ml-[2px] h-full w-1 border-x border-[#c0c0c0]" />
   </div>
);

const Timeline = () => {
   const labels = ['0:00', '15:00', '30:00', '45:00', '1:00:00', '1:15:00', '1:30:00', '1:45:00', '2:00:00'];
   const ticks = Array.from({ length: 25 }, (_, i) => Math.round(((i - 1) * 215) / 3));
   return (
      <div className="flex h-[30px] shrink-0 border-t border-b-2 border-t-[#c0c0c0] border-b-black bg-[#f8f9ff]">
         <div className="w-[12px] shrink-0 border-r border-[#c0c0c0]" />
         <button
            aria-label="Pinned play head"
            className="flex w-[27px] shrink-0 items-center justify-center border-r border-b border-[#9aa3b8] bg-[#e9f0fd]"
         >
            <svg width="15" height="13"><path d="M1 1H14L7.500 12Z" fill="#7ddb7d" stroke="#204020" /></svg>
         </button>
         <svg className="h-[27px] min-w-0 flex-1" shapeRendering="crispEdges">
            <g transform="translate(94 0)">
               {labels.map((label, i) => (
                  <text key={label} x={i * 215} y="18" textAnchor="middle" className="text-[12px] font-bold">
                     {label}
                  </text>
               ))}
               {ticks.map((x, i) => (
                  <path key={x} d={i % 3 === 1 ? `M${x} 22V27` : `M${x} 24V27`} stroke="#000" />
               ))}
               <path d="M0 1V27" stroke="#000" />
               <path d="M1 20L6 14V26Z" fill="#b8b8b8" stroke="#808080" />
            </g>
         </svg>
      </div>
   );
};

const VerticalRuler = () => (
   <div className="flex w-[31px] shrink-0 flex-col bg-[#d6e2ff] text-[12px] leading-4">
      <RulerMark className="h-4 font-bold" text="1,0" />
      <RulerMark className="h-[42px]" text="0,5" tick />
      <RulerMark className="h-[26px] font-bold" text="0,0" tick />
      <RulerMark className="h-[46px]" text="-0,5" tick />
      <RulerMark className="h-[6px] font-bold" text="-1,0" />
   </div>
);

const RulerMark = ({ text, className, tick }: { text: string; className: string; tick?: boolean }) => (
   <div className={`flex items-center justify-end gap-[2px] ${className}`}>
      <span>{text}</span>
      <span className={`h-px w-1 ${tick ? 'bg-black' : ''}`} />
   </div>
);

const TrackPanel = ({ name }: { name: string }) => (
   <div className="flex w-[96px] shrink-0 flex-col border-r border-black bg-[#d6e2ff] text-[11px]">
      <div className="flex h-[19px] border-b border-[#808080] bg-[#ccd9f2]">
         <button aria-label={`Close ${name}`} className="flex w-[18px] items-center justify-center border-r border-[#808080]">
            <svg width="8" height="8"><path d="M0 0L8 8M8 0L0 8" stroke="#000" strokeWidth="1.500" /></svg>
         </button>
         <button className="ml-px flex flex-1 items-center justify-between border-l border-white pr-[2px] pl-px whitespace-nowrap">
            <span>{name}</span>
            <svg width="11" height="6"><path d="M0 0H11L5.500 6Z" /></svg>
         </button>
      </div>
      <div className="grid h-[17px] grid-cols-2 border-b border-[#808080] bg-[#ccd9f2]">
         <button className="border-r border-[#808080]">Mute</button>
         <button>Solo</button>
      </div>
      <div className="flex flex-col gap-[6px] pr-2 pl-[11px]">
         <Slider label={`${name} gain`} value={48} ticks={9} left="-" right="+" light />
         <Slider label={`${name} pan`} value={48} ticks={9} left="L" right="R" light />
      </div>
      <div className="mt-2 pl-[2px] leading-3 whitespace-nowrap">
         <p>Mono, 48000Hz</p>
         <p>32-bit float</p>
      </div>
      <div className="mt-auto flex h-[18px]">
         <button
            aria-label={`Collapse ${name}`}
            className="flex w-[18px] items-center justify-center border-r border-b border-[#808080] bg-[#ccd9f2]"
         >
            <svg width="11" height="6"><path d="M0 6H11L5.500 0Z" /></svg>
         </button>
         <button className="ml-px w-[58px] border-r border-b border-[#808080] bg-[#ccd9f2]">Select</button>
      </div>
   </div>
);

const TrackRow = ({ track }: { track: Track }) => (
   <div
      className={`mt-[4px] ml-[4px] mr-[4px] flex h-[146px] border-t border-r-2 border-b-2 border-l border-black ${
         track.selected
            ? 'shadow-[0_0_0_1px_#fffb6e,0_0_0_2px_#e6e070,0_0_0_3px_#bdb97e,0_0_0_4px_#93937f]'
            : ''
      }`}
   >
      <TrackPanel name={track.name} />
      <VerticalRuler />
      <div className="flex min-w-0 flex-1 overflow-hidden border-l border-[#200808] bg-[#d4d4d4]">
         <Waveform track={track} />
         <div className="w-px bg-[#808080]" />
      </div>
   </div>
);

const TimeField = ({ parts, big }: { parts: string[]; big?: boolean }) => (
   <div
      className={`flex items-stretch border-t-2 border-l-2 border-r border-b border-t-[#808080] border-l-[#808080] border-r-[#d8d8d8] border-b-[#d8d8d8] bg-[#b5bac6] text-[#0000b4] ${
         big ? 'h-[39px] w-[234px] text-[28px]' : 'h-[22px] w-[156px] text-[14px]'
      }`}
   >
      <div className="flex flex-1 items-center justify-between">
         {parts.map((part, i) => (
            <span key={i} className={`flex h-full items-center ${/\d/.test(part) ? 'bg-[#d2d2d2]' : ''}`}>
               {part.split('').map((c, j) => (
                  <span
                     key={j}
                     className={`text-center ${
                        c === '.'
                           ? 'w-[4px]'
                           : big
                             ? /\d/.test(c)
                                ? 'w-[21px]'
                                : 'w-[22px]'
                             : /\d/.test(c)
                               ? 'w-[11px]'
                               : 'w-[11px]'
                     }`}
                  >
                     {c}
                  </span>
               ))}
            </span>
         ))}
      </div>
      <button aria-label="Time format" className="flex w-[8px] items-center justify-center border-l border-white">
         <svg width="7" height="5"><path d="M0 0H7L3.500 5Z" /></svg>
      </button>
   </div>
);

const SelectionBar = () => (
   <div className="flex h-[58px] shrink-0 border-t border-b-2 border-[#c0c0c0] bg-[#f8f9ff]">
      <Grip />
      <div className="flex gap-[6px] pl-[5px] font-['Open_Sans',sans-serif] text-[12px]">
         <div className="flex w-[93px] flex-col justify-between pb-[5px]">
            <label htmlFor="rate" className="pt-[4px] whitespace-nowrap">Project Rate (Hz)</label>
            <div className="relative h-[23px]">
               <input id="rate" defaultValue="48000" className="h-full w-full border border-[#707070] bg-white pl-1 text-[11px]" />
               <Chevron />
            </div>
         </div>
         <div className="my-[6px] w-px bg-[#c0c0c0]" />
         <div className="flex w-[68px] flex-col justify-between pb-[5px]">
            <span className="pt-[4px]">Snap-To</span>
            <Dropdown label="Snap-To" value="Off" className="h-[23px] w-full" />
         </div>
         <div className="my-[6px] w-px bg-[#c0c0c0]" />
         <div className="flex w-[318px] flex-col justify-between pb-[5px]">
            <Dropdown label="Selection mode" value="Start and End of Selection" className="h-[23px] w-full" />
            <div className="flex justify-between font-['Liberation_Sans',sans-serif]">
               <TimeField parts={['00', 'h', '00', 'm', '00.000', 's']} />
               <TimeField parts={['00', 'h', '00', 'm', '00.000', 's']} />
            </div>
         </div>
      </div>
      <div className="ml-[5px] flex border-l-2 border-[#c0c0c0]"><Grip /></div>
      <div className="flex items-center border-r border-[#c0c0c0] pr-[2px]">
         <TimeField parts={['00', 'h', '00', 'm', '00', 's']} big />
      </div>
      <div className="ml-[2px] w-px bg-[#c0c0c0]" />
   </div>
);

const Arrow = ({ d }: { d: string }) => (
   <svg width="9" height="9"><path d={d} fill="none" stroke="#505050" strokeWidth="2" /></svg>
);

const App = () => {
   return (
      <div className="flex h-screen w-full flex-col overflow-hidden bg-[#f0f0f0] font-['Liberation_Sans',Arial,sans-serif] text-black">
         <TitleBar />
         <nav className="flex h-[21px] items-center gap-[11px] border-b border-[#f0f0f0] bg-white pl-[7px] font-['Open_Sans',sans-serif] text-[12px]">
            {MENUS.map(([before, key, after]) => (
               <button key={before + key + after}>
                  {before}
                  <span className="underline">{key}</span>
                  {after}
               </button>
            ))}
         </nav>

         {/* Toolbars */}
         <div className="flex h-[56px] shrink-0 border-t border-[#c0c0c0] bg-[#f8f9ff]">
            <TransportBar />
            <ToolsBar />
            <div className="flex min-w-0 flex-1 flex-col font-['Open_Sans',sans-serif]">
               <div className="flex h-[28px] shrink-0 border-b border-[#c0c0c0] font-['Liberation_Sans',sans-serif]">
                  <Meters />
                  <MixerBar />
                  <EditBar />
                  <Grip />
                  <ToolButton label="Play at Speed"><PlayIcon /></ToolButton>
                  <div className="flex w-[98px] items-center pr-[5px] pl-[6px]">
                     <Slider label="Playback Speed" value={30} ticks={10} left="-" right="+" />
                  </div>
                  <div className="w-1 border-x border-[#c0c0c0]" />
               </div>
               <DeviceBar />
            </div>
         </div>
         <Timeline />

         {/* Tracks */}
         <main className="flex min-h-0 flex-1">
            <div className="min-w-0 flex-1 bg-[#636685]">
               {TRACKS.map((track) => (
                  <TrackRow key={track.name} track={track} />
               ))}
            </div>
            <div className="flex w-[17px] flex-col border-l border-white">
               <div className="flex h-4 items-center justify-center"><Arrow d="M.5 6L4.500 2L8.500 6" /></div>
               <div className="mr-px flex-1 bg-[#cdcdcd]" />
               <div className="flex h-[18px] items-center justify-center"><Arrow d="M.5 3L4.500 7L8.500 3" /></div>
            </div>
         </main>
         <div className="flex h-[17px] shrink-0 items-center border-t border-white pr-[17px] pl-[135px]">
            <div className="flex w-[17px] justify-center"><Arrow d="M6 .5L2 4.500L6 8.500" /></div>
            <div className="flex h-[15px] flex-1"><div className="w-29/36 bg-[#cdcdcd]" /></div>
            <div className="flex w-[17px] justify-center"><Arrow d="M3 .5L7 4.500L3 8.500" /></div>
         </div>

         <SelectionBar />
         <footer className="flex h-[23px] shrink-0 items-center font-['Open_Sans',sans-serif] text-[12px]">
            <span className="w-[181px] border-r border-[#d8d8d8] pl-[14px]">Stopped.</span>
            <span className="flex-1 pl-[4px]">Click and drag to select audio</span>
            <span className="h-5 w-[179px] border-x border-[#d8d8d8]" />
         </footer>
      </div>
   );
};

export default App;
